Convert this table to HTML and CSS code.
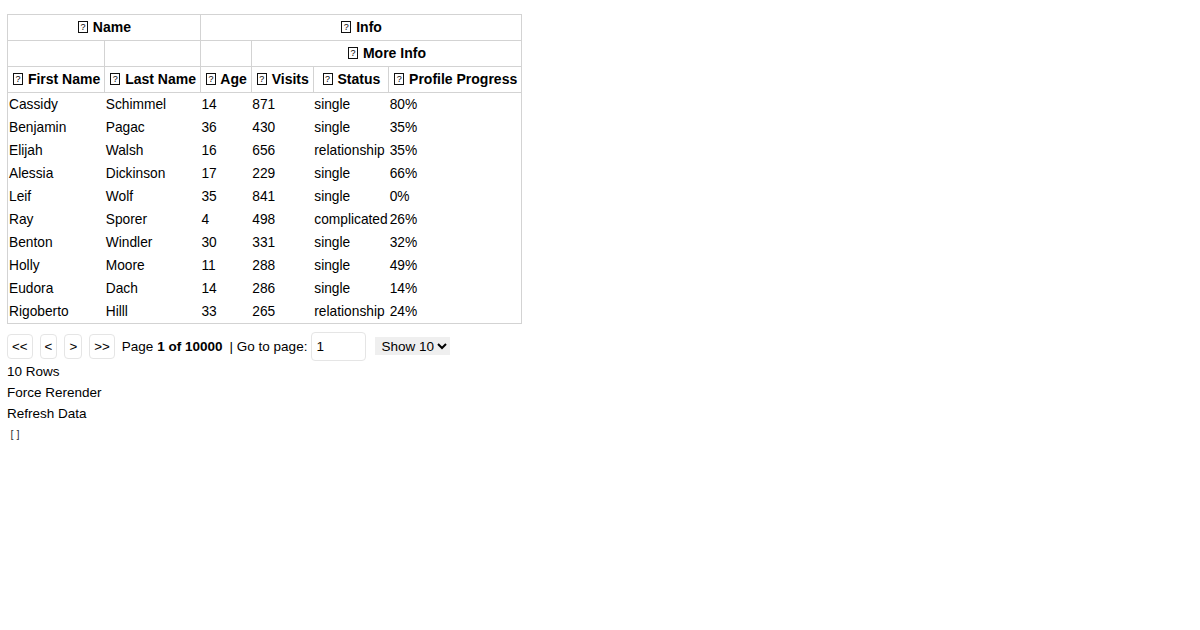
FILE: index.html
```html
<!DOCTYPE html>
<html>
<head>
<meta charset="utf-8">
<link rel="stylesheet" href="styles.css">
</head>
<body>
<div class="page">
  <div class="spacer-top"></div>
  <table class="grid">
    <thead>
      <tr>
        <th colspan="2"><span class="tofu">?</span> Name</th>
        <th colspan="4"><span class="tofu">?</span> Info</th>
      </tr>
      <tr>
        <th></th>
        <th></th>
        <th></th>
        <th colspan="3"><span class="tofu">?</span> More Info</th>
      </tr>
      <tr>
        <th><span class="tofu">?</span> First Name</th>
        <th><span class="tofu">?</span> Last Name</th>
        <th><span class="tofu">?</span> Age</th>
        <th><span class="tofu">?</span> Visits</th>
        <th><span class="tofu">?</span> Status</th>
        <th><span class="tofu">?</span> Profile Progress</th>
      </tr>
    </thead>
    <tbody>
      <tr><td>Cassidy</td><td>Schimmel</td><td>14</td><td>871</td><td>single</td><td>80%</td></tr>
      <tr><td>Benjamin</td><td>Pagac</td><td>36</td><td>430</td><td>single</td><td>35%</td></tr>
      <tr><td>Elijah</td><td>Walsh</td><td>16</td><td>656</td><td>relationship</td><td>35%</td></tr>
      <tr><td>Alessia</td><td>Dickinson</td><td>17</td><td>229</td><td>single</td><td>66%</td></tr>
      <tr><td>Leif</td><td>Wolf</td><td>35</td><td>841</td><td>single</td><td>0%</td></tr>
      <tr><td>Ray</td><td>Sporer</td><td>4</td><td>498</td><td>complicated</td><td>26%</td></tr>
      <tr><td>Benton</td><td>Windler</td><td>30</td><td>331</td><td>single</td><td>32%</td></tr>
      <tr><td>Holly</td><td>Moore</td><td>11</td><td>288</td><td>single</td><td>49%</td></tr>
      <tr><td>Eudora</td><td>Dach</td><td>14</td><td>286</td><td>single</td><td>14%</td></tr>
      <tr><td>Rigoberto</td><td>Hilll</td><td>33</td><td>265</td><td>relationship</td><td>24%</td></tr>
    </tbody>
  </table>
  <div class="pager">
    <button class="pbtn">&lt;&lt;</button>
    <button class="pbtn">&lt;</button>
    <button class="pbtn">&gt;</button>
    <button class="pbtn">&gt;&gt;</button>
    <span class="group"><span>Page</span><strong>1 of 10000</strong></span>
    <span class="group">| Go to page: <input class="goto" type="number" value="1"></span>
    <select class="size">
      <option>Show 10</option>
    </select>
  </div>
  <div class="line">10 Rows</div>
  <div class="line">Force Rerender</div>
  <div class="line">Refresh Data</div>
  <pre class="state">[]</pre>
</div>
</body>
</html>
```

FILE: styles.css
```css
* { box-sizing: border-box; }
html, body { margin: 0; padding: 0; background: #fff; }
body {
  font-family: "Liberation Sans", Arial, sans-serif;
  font-size: 13.5px;
  line-height: 21px;
  color: #000;
}
.page { padding: 8px 7px; }
.spacer-top { height: 6px; }
.grid {
  border-collapse: collapse;
  border: 1px solid #d3d3d3;
}
.grid th {
  border-bottom: 1px solid #d3d3d3;
  border-right: 1px solid #d3d3d3;
  padding: 2px 4px;
  font-size: 14px;
  font-weight: bold;
  text-align: center;
  white-space: nowrap;
}
.grid td {
  padding: 1px;
  font-size: 13.75px;
  line-height: 21px;
  text-align: left;
  white-space: nowrap;
}
.tofu {
  display: inline-block;
  width: 10px;
  height: 12px;
  margin: 0 1px;
  border: 1px solid #111;
  overflow: hidden;
  font-size: 9px;
  line-height: 10px;
  text-align: center;
  font-weight: normal;
  vertical-align: -1px;
}
.pager {
  margin-top: 7px;
  display: flex;
  align-items: center;
  gap: 7px;
  height: 30px;
}
.pbtn {
  font-family: "Liberation Sans", Arial, sans-serif;
  font-size: 13.33px;
  line-height: 15px;
  padding: 4px;
  border: 1px solid #e5e5e5;
  border-radius: 4px;
  background: #fff;
  color: #000;
}
.group { display: flex; align-items: center; gap: 4px; }
.goto {
  font-family: "Liberation Sans", Arial, sans-serif;
  font-size: 13.5px;
  width: 55px;
  height: 29px;
  padding: 4px;
  border: 1px solid #e5e5e5;
  border-radius: 4px;
  -moz-appearance: textfield;
}
.goto::-webkit-inner-spin-button, .goto::-webkit-outer-spin-button { -webkit-appearance: none; margin: 0; }
.size {
  margin-left: 2px;
  font-family: "Liberation Sans", Arial, sans-serif;
  font-size: 13.5px;
  line-height: 18px;
  height: 18px;
  border: none;
  background: #efefef;
  padding: 0 0 0 2px;
  color: #000;
}
.line { line-height: 21px; }
.state {
  margin: 0 0 0 2px;
  font-family: "DejaVu Sans Mono", monospace;
  font-size: 10px;
  line-height: 21px;
  color: #333;
}
```
